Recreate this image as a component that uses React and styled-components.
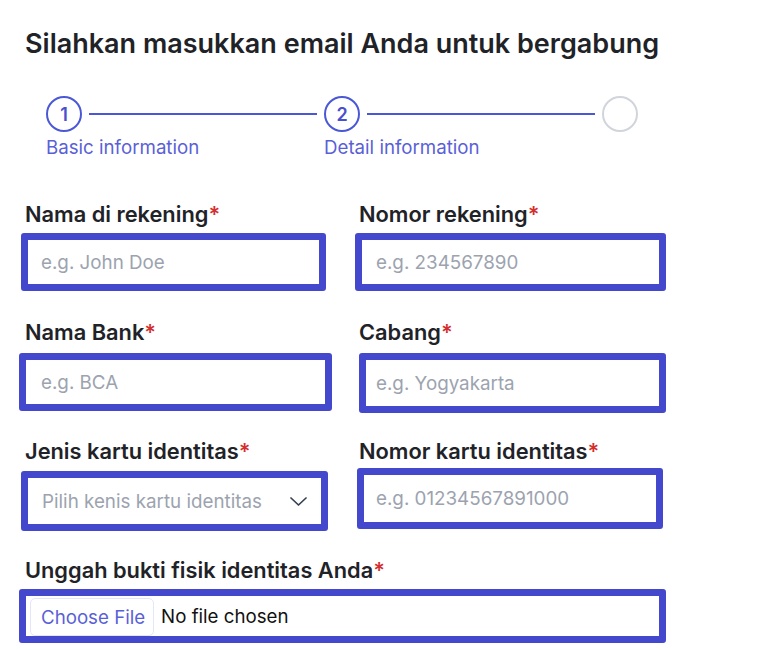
import styled, { createGlobalStyle } from "styled-components";

const GlobalStyle = createGlobalStyle`
  body {
    margin: 0;
    background: #ffffff;
    font-family: Inter, "Noto Sans", sans-serif;
    color: #1f2328;
  }
`;

const Page = styled.div`
  width: 781px;
  height: 650px;
  overflow: hidden;
  box-sizing: border-box;
  padding: 28px 0 0 0;
`;

const Title = styled.h1`
  margin: 0 0 0 25px;
  font-size: 27px;
  line-height: 32px;
  font-weight: 600;
  color: #1f2328;
`;

// stepper
const Stepper = styled.div`
  display: flex;
  margin: 36px 0 0 46px;
`;

const Step = styled.div`
  width: ${(p) => (p.$last ? "auto" : "278px")};
  display: flex;
  flex-direction: column;
`;

const Track = styled.div`
  display: flex;
  align-items: center;
`;

const Circle = styled.div`
  width: 36px;
  height: 36px;
  box-sizing: border-box;
  border-radius: 50%;
  border: 2px solid ${(p) => (p.$active ? "#4b58d6" : "#d1d5db")};
  display: flex;
  align-items: center;
  justify-content: center;
  font-size: 18px;
  font-weight: 600;
  color: #4a4fcf;
  flex-shrink: 0;
`;

const Line = styled.div`
  flex: 1;
  height: 2px;
  margin: 0 7px;
  background: #4b58d6;
`;

const StepLabel = styled.div`
  margin-top: 5px;
  font-size: 18.7px;
  line-height: 22px;
  color: #5a5fd8;
  white-space: nowrap;
`;

// form
const Form = styled.div`
  display: grid;
  grid-template-columns: 334px 320px;
  row-gap: 29px;
  margin: 43px 0 0 0;
  padding-left: 21px;
`;

const Field = styled.div`
  display: flex;
  flex-direction: column;
  grid-column: ${(p) => (p.$wide ? "1 / span 2" : "auto")};
  margin-top: ${(p) => p.$mt || 0}px;
`;

const Label = styled.label`
  font-size: 21.8px;
  line-height: 24px;
  font-weight: 600;
  color: #1f2328;
  padding-left: 4px;
  white-space: nowrap;
  margin-bottom: ${(p) => p.$gap || 7}px;
`;

const Star = styled.span`
  color: #d32f2f;
`;

const Box = styled.div`
  box-sizing: border-box;
  width: ${(p) => p.$w}px;
  height: ${(p) => p.$h || 58}px;
  margin-left: ${(p) => p.$dx || 0}px;
  border: 7px solid #4348cd;
  border-radius: 3px;
  background: #ffffff;
  display: flex;
  align-items: center;
`;

const Input = styled.input`
  border: none;
  outline: none;
  width: 100%;
  height: 100%;
  padding: 0 10px 0 ${(p) => p.$pad || 13}px;
  box-sizing: border-box;
  font-family: Inter, "Noto Sans", sans-serif;
  font-size: 18.8px;
  color: #1f2328;
  background: transparent;

  &::placeholder {
    color: #9ca3af;
  }
`;

const SelectText = styled.span`
  flex: 1;
  padding-left: 14px;
  font-size: 18.8px;
  color: #9ca3af;
  white-space: nowrap;
`;

const Chevron = styled.svg`
  width: 17px;
  height: 9px;
  margin-right: 14px;
  flex-shrink: 0;
`;

const ChooseButton = styled.span`
  box-sizing: border-box;
  height: 38px;
  margin: 2px 0 0 4px;
  align-self: flex-start;
  padding: 0 8px 0 10px;
  display: flex;
  align-items: center;
  border: 1px solid #e3e6fb;
  border-radius: 5px;
  font-size: 18.7px;
  color: #5a5fd8;
`;

const FileText = styled.span`
  margin-left: 7px;
  font-size: 18.7px;
  color: #111111;
`;

function App() {
  return (
    <Page>
      <GlobalStyle />
      <Title>Silahkan masukkan email Anda untuk bergabung</Title>

      <Stepper>
        <Step>
          <Track>
            <Circle $active>1</Circle>
            <Line />
          </Track>
          <StepLabel>Basic information</StepLabel>
        </Step>
        <Step>
          <Track>
            <Circle $active>2</Circle>
            <Line />
          </Track>
          <StepLabel>Detail information</StepLabel>
        </Step>
        <Step $last>
          <Track>
            <Circle />
          </Track>
        </Step>
      </Stepper>

      <Form>
        <Field>
          <Label>
            Nama di rekening<Star>*</Star>
          </Label>
          <Box $w={305}>
            <Input placeholder="e.g. John Doe" />
          </Box>
        </Field>
        <Field>
          <Label>
            Nomor rekening<Star>*</Star>
          </Label>
          <Box $w={311}>
            <Input $pad={14} placeholder="e.g. 234567890" />
          </Box>
        </Field>

        <Field>
          <Label $gap={9}>
            Nama Bank<Star>*</Star>
          </Label>
          <Box $w={313} $dx={-2}>
            <Input $pad={15} placeholder="e.g. BCA" />
          </Box>
        </Field>
        <Field>
          <Label $gap={9}>
            Cabang<Star>*</Star>
          </Label>
          <Box $w={307} $dx={4} $h={60}>
            <Input $pad={10} placeholder="e.g. Yogyakarta" />
          </Box>
        </Field>

        <Field $mt={-3}>
          <Label $gap={8}>
            Jenis kartu identitas<Star>*</Star>
          </Label>
          <Box $w={307} $h={60}>
            <SelectText>Pilih kenis kartu identitas</SelectText>
            <Chevron viewBox="0 0 17 9" fill="none">
              <path
                d="M1 1L8.5 8L16 1"
                stroke="#374151"
                strokeWidth="1.7"
                strokeLinecap="round"
                strokeLinejoin="round"
              />
            </Chevron>
          </Box>
        </Field>
        <Field $mt={-3}>
          <Label $gap={5}>
            Nomor kartu identitas<Star>*</Star>
          </Label>
          <Box $w={306} $dx={2} $h={61}>
            <Input $pad={12} placeholder="e.g. 01234567891000" />
          </Box>
        </Field>

        <Field $wide $mt={-2}>
          <Label>
            Unggah bukti fisik identitas Anda<Star>*</Star>
          </Label>
          <Box $w={647} $dx={-2} $h={54}>
            <ChooseButton>Choose File</ChooseButton>
            <FileText>No file chosen</FileText>
          </Box>
        </Field>
      </Form>
    </Page>
  );
}

export default App;
